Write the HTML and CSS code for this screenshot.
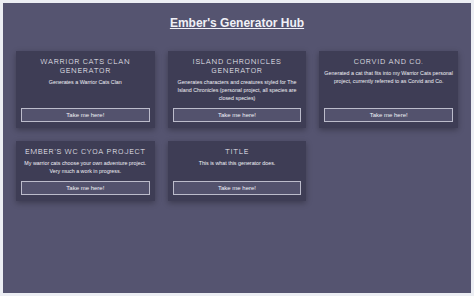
FILE: index.html
```html
<!DOCTYPE html>
<html>
<head>
  <title>Ember's Generator Hub</title>
  <link rel="stylesheet" href="styles.css">
</head>
<body>
  <div class="hub">
    <h1 class="hub-title">Ember's Generator Hub</h1>
    <div class="cards">
      <div class="card">
        <h2 class="card-title">Warrior Cats Clan Generator</h2>
        <p class="card-desc">Generates a Warrior Cats Clan</p>
        <button class="card-btn">Take me here!</button>
      </div>
      <div class="card">
        <h2 class="card-title">Island Chronicles Generator</h2>
        <p class="card-desc">Generates characters and creatures styled for The Island Chronicles (personal project, all species are closed species)</p>
        <button class="card-btn">Take me here!</button>
      </div>
      <div class="card">
        <h2 class="card-title">Corvid and Co.</h2>
        <p class="card-desc">Generated a cat that fits into my Warrior Cats personal project, currently referred to as Corvid and Co.</p>
        <button class="card-btn">Take me here!</button>
      </div>
      <div class="card">
        <h2 class="card-title">Ember's WC CYOA Project</h2>
        <p class="card-desc">My warrior cats choose your own adventure project. Very much a work in progress.</p>
        <button class="card-btn">Take me here!</button>
      </div>
      <div class="card">
        <h2 class="card-title">Title</h2>
        <p class="card-desc">This is what this generator does.</p>
        <button class="card-btn">Take me here!</button>
      </div>
    </div>
  </div>
</body>
</html>
```

FILE: styles.css
```css
html, body {
  height: 100%;
}
body {
  margin: 0;
  padding: 3px;
  box-sizing: border-box;
  background-color: #eceef3;
  font-family: "Liberation Sans", Arial, sans-serif;
}
.hub {
  height: 100%;
  background-color: #555470;
  padding: 0 13px;
  box-sizing: border-box;
}
.hub-title {
  margin: 0;
  padding: 13px 0 21px;
  font-size: 12px;
  line-height: 14px;
  font-weight: bold;
  color: #f0f0f6;
  text-align: center;
  text-decoration: underline;
}
.cards {
  display: grid;
  grid-template-columns: repeat(3, 1fr);
  gap: 13px;
}
.card {
  display: flex;
  flex-direction: column;
  background-color: #3e3d55;
  padding: 6px 4px;
  box-shadow: 0 2px 6px rgba(0, 0, 0, 0.3);
  text-align: center;
  color: #f0f0f6;
}
.card-title {
  margin: 0;
  font-family: Roboto, "Liberation Sans", sans-serif;
  font-weight: 300;
  font-size: 8px;
  line-height: 9px;
  letter-spacing: 0.7px;
  text-transform: uppercase;
}
.card-desc {
  margin: 3px 0 6px;
  font-size: 5.33px;
  line-height: 8px;
}
.card-btn {
  margin: auto 1px 0;
  height: 14px;
  padding: 0;
  background-color: #53526d;
  border: 1px solid #bcbccb;
  color: #f0f0f6;
  font-family: "Liberation Sans", Arial, sans-serif;
  font-size: 6px;
}
```
